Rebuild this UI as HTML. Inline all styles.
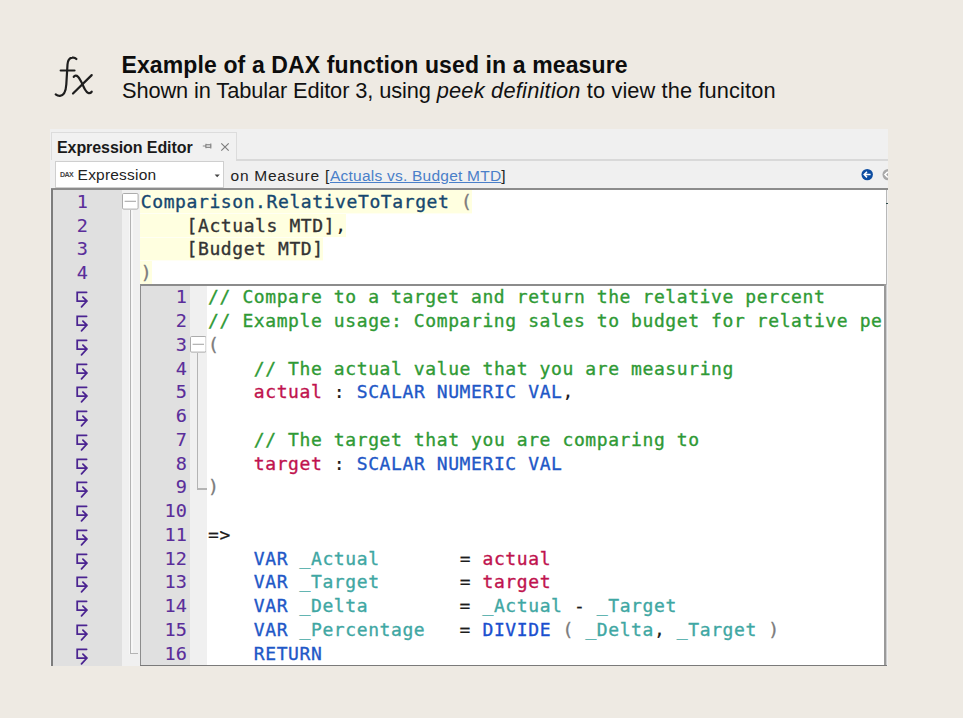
<!DOCTYPE html>
<html lang="en"><head><meta charset="utf-8"><title>Example of a DAX function used in a measure</title>
<style>
html,body{margin:0;padding:0}
body{width:963px;height:718px;background:#eeeae3;position:relative;overflow:hidden;font-family:"Liberation Sans",sans-serif}
.a{position:absolute}
#title{left:121.5px;top:51px;font-size:23px;font-weight:bold;color:#0d0d0d;white-space:nowrap;line-height:28px;letter-spacing:0.12px}
#sub{left:122px;top:77.8px;font-size:21.8px;color:#111;white-space:nowrap;line-height:26px;letter-spacing:0.03px}
#tabt{left:57px;top:137.8px;font-size:16px;font-weight:bold;color:#1a1a1a;white-space:nowrap;line-height:20px;letter-spacing:-0.08px}
#ddt{left:77.6px;top:164.2px;font-size:15.5px;color:#222;white-space:nowrap;line-height:22px;letter-spacing:0.2px}
#dax{left:60px;top:170.5px;font-size:7px;font-weight:bold;color:#444;line-height:8px;letter-spacing:-0.6px}
#onm{left:230.6px;top:165px;font-size:15.5px;color:#222;white-space:nowrap;line-height:22px}
#s1{letter-spacing:-0.11px}#sub i{letter-spacing:0.23px}#s3{letter-spacing:0.11px}
#onm b{font-weight:normal;letter-spacing:0.74px}
#onm u{letter-spacing:0.234px}
#onm u{color:#4a7fc9}
.c{-webkit-text-stroke-width:0.35px;font-family:'DejaVu Sans Mono','Liberation Mono',monospace;font-size:18px;white-space:pre;letter-spacing:0.594px;position:absolute;height:24px;line-height:24px}
.n{color:#5a2d9a;text-align:right;font-size:18.5px;letter-spacing:0.29px;-webkit-text-stroke-width:0.12px}
.fn{color:#16476f}.ms{color:#333}.pp{color:#7c7c7c}.pk{color:#1c1c1c;-webkit-text-stroke-width:0.15px}
.cm{color:#2f9a35}.pr{color:#c0134e}.kw{color:#1f58c7}.vr{color:#3fa7a3}.df{color:#1a4fcf}
</style></head><body>
<svg class="a" style="left:50px;top:52px" width="50" height="50" viewBox="0 0 50 50"><g fill="none" stroke="#1e1e1e" stroke-width="2.2" stroke-linecap="round" stroke-linejoin="round"><path d="M26.4 7.0 C25.2 5.7 23.6 5.4 22.2 5.7 C19 6.3 17.7 9 17.5 12.5 L16.3 32.5 C15.9 38.5 14.5 43.5 10 43.9 C8.2 44 6.8 43.3 5.7 42.4"/><path d="M10.7 18.5 H24.5"/><path d="M23.7 24.8 C24.6 23.5 26.5 23.2 28 24.8 C31 28 32.5 33 35 37.5 C37 41 39.5 42.5 41.7 39.7"/><path d="M41.7 23.1 L23 41.5"/></g></svg>
<div id="title" class="a">Example of a DAX function used in a measure</div>
<div id="sub" class="a"><span id="s1">Shown in Tabular Editor 3, using </span><i>peek definition</i><span id="s3"> to view the funciton</span></div>
<div class="a" style="left:50px;top:129px;width:838px;height:537px;background:#f0f0f0;"></div>
<div class="a" style="left:51px;top:132.2px;width:185.6px;height:28px;background:#f1f1f1;border:1px solid #dcdcdc;border-bottom:none;box-sizing:border-box"></div>
<div class="a" style="left:236px;top:159.3px;width:652px;height:1.6px;background:#d9d9d9;"></div>
<div id="tabt" class="a">Expression Editor</div>
<div class="a" style="left:55px;top:160.5px;width:168.5px;height:27.5px;background:#fff;border:1px solid #cfcfcf;box-sizing:border-box"></div>
<div id="dax" class="a">DAX</div><div id="ddt" class="a">Expression</div>
<div id="onm" class="a"><b id="om1">on Measure [</b><u id="om2">Actuals vs. Budget MTD</u>]</div>
<div class="a" style="left:51px;top:188.5px;width:836.4px;height:477.5px;background:#fff;"></div>
<div class="a" style="left:52px;top:189.5px;width:70px;height:476.5px;background:#e0e0e0;"></div>
<div class="a" style="left:122px;top:189.5px;width:18.3px;height:476.5px;background:#f0f0f0;"></div>
<div class="a" style="left:140.3px;top:189.8px;width:331.47px;height:23.75px;background:#fffff3;"></div>
<div class="a" style="left:140.3px;top:190.2px;width:331.47px;height:22.75px;background:#ffffe0;"></div>
<div class="a" style="left:140.3px;top:213.55px;width:205.74px;height:23.75px;background:#fffff3;"></div>
<div class="a" style="left:140.3px;top:213.95px;width:205.74px;height:22.75px;background:#ffffe0;"></div>
<div class="a" style="left:140.3px;top:237.3px;width:182.88px;height:23.75px;background:#fffff3;"></div>
<div class="a" style="left:140.3px;top:237.7px;width:182.88px;height:22.75px;background:#ffffe0;"></div>
<div class="a" style="left:140.3px;top:261.05px;width:11.43px;height:23.75px;background:#fffff3;"></div>
<div class="a" style="left:140.3px;top:261.45px;width:11.43px;height:22.75px;background:#ffffe0;"></div>
<div class="a" style="left:51px;top:188.0px;width:837px;height:1.5px;background:#8c8c8c;"></div>
<div class="a" style="left:51px;top:188.5px;width:1.6px;height:477.5px;background:#7d7d7d;"></div>
<div class="c n" style="left:60.3px;top:190px;width:28px">1</div><div class="c" style="left:140.8px;top:190px"><span class="fn">Comparison.RelativeToTarget</span> <span class="pp">(</span></div>
<div class="c n" style="left:60.3px;top:214px;width:28px">2</div><div class="c" style="left:140.8px;top:214px">    <span class="ms">[Actuals MTD]</span><span class="pk">,</span></div>
<div class="c n" style="left:60.3px;top:237px;width:28px">3</div><div class="c" style="left:140.8px;top:237px">    <span class="ms">[Budget MTD]</span></div>
<div class="c n" style="left:60.3px;top:261px;width:28px">4</div><div class="c" style="left:140.8px;top:261px"><span class="pp">)</span></div>
<div class="a" style="left:139.5px;top:284.4px;width:747.8px;height:381.6px;background:#fff;"></div>
<div class="a" style="left:140.5px;top:285.5px;width:49px;height:380.5px;background:#e0e0e0;"></div>
<div class="a" style="left:189.5px;top:285.5px;width:17.7px;height:380.5px;background:#f0f0f0;"></div>
<div class="a" style="left:139.5px;top:284.4px;width:747.8px;height:1.2px;background:#8c8c8c;"></div>
<div class="a" style="left:139.5px;top:284.4px;width:1.2px;height:381.6px;background:#8c8c8c;"></div>
<div class="a" style="left:884px;top:284.4px;width:1.6px;height:381.6px;background:#9a9a9a;"></div>
<div class="a" style="left:885.6px;top:284.4px;width:1.7px;height:381.6px;background:#cdcdcd;"></div>
<div class="a" style="left:139.5px;top:665px;width:747.8px;height:1px;background:#7a7a7a;"></div>
<div class="c n" style="left:141.3px;top:285px;width:46px">1</div><div class="c" style="left:208.1px;top:285px"><span class="cm">// Compare to a target and return the relative percent</span></div>
<div class="c n" style="left:141.3px;top:309px;width:46px">2</div><div class="c" style="left:208.1px;top:309px"><span class="cm">// Example usage: Comparing sales to budget for relative pe</span></div>
<div class="c n" style="left:141.3px;top:333px;width:46px">3</div><div class="c" style="left:208.1px;top:333px"><span class="pp">(</span></div>
<div class="c n" style="left:141.3px;top:357px;width:46px">4</div><div class="c" style="left:208.1px;top:357px">    <span class="cm">// The actual value that you are measuring</span></div>
<div class="c n" style="left:141.3px;top:380px;width:46px">5</div><div class="c" style="left:208.1px;top:380px">    <span class="pr">actual</span> <span class="pk">:</span> <span class="kw">SCALAR NUMERIC VAL</span><span class="pk">,</span></div>
<div class="c n" style="left:141.3px;top:404px;width:46px">6</div>
<div class="c n" style="left:141.3px;top:428px;width:46px">7</div><div class="c" style="left:208.1px;top:428px">    <span class="cm">// The target that you are comparing to</span></div>
<div class="c n" style="left:141.3px;top:452px;width:46px">8</div><div class="c" style="left:208.1px;top:452px">    <span class="pr">target</span> <span class="pk">:</span> <span class="kw">SCALAR NUMERIC VAL</span></div>
<div class="c n" style="left:141.3px;top:475px;width:46px">9</div><div class="c" style="left:208.1px;top:475px"><span class="pp">)</span></div>
<div class="c n" style="left:141.3px;top:499px;width:46px">10</div>
<div class="c n" style="left:141.3px;top:523px;width:46px">11</div><div class="c" style="left:208.1px;top:523px"><span class="pk">=&gt;</span></div>
<div class="c n" style="left:141.3px;top:547px;width:46px">12</div><div class="c" style="left:208.1px;top:547px">    <span class="kw">VAR</span> <span class="vr">_Actual</span>       <span class="pk">=</span> <span class="pr">actual</span></div>
<div class="c n" style="left:141.3px;top:570px;width:46px">13</div><div class="c" style="left:208.1px;top:570px">    <span class="kw">VAR</span> <span class="vr">_Target</span>       <span class="pk">=</span> <span class="pr">target</span></div>
<div class="c n" style="left:141.3px;top:594px;width:46px">14</div><div class="c" style="left:208.1px;top:594px">    <span class="kw">VAR</span> <span class="vr">_Delta</span>        <span class="pk">=</span> <span class="vr">_Actual</span> <span class="pk">-</span> <span class="vr">_Target</span></div>
<div class="c n" style="left:141.3px;top:618px;width:46px">15</div><div class="c" style="left:208.1px;top:618px">    <span class="kw">VAR</span> <span class="vr">_Percentage</span>   <span class="pk">=</span> <span class="df">DIVIDE</span> <span class="pp">(</span> <span class="vr">_Delta</span><span class="pk">,</span> <span class="vr">_Target</span> <span class="pp">)</span></div>
<div class="c n" style="left:141.3px;top:642px;width:46px">16</div><div class="c" style="left:208.1px;top:642px">    <span class="kw">RETURN</span></div>
<div class="a" style="left:128.6px;top:209.7px;width:4.4px;height:443.90000000000003px;background:#f7f7f7;"></div>
<div class="a" style="left:130.0px;top:209.7px;width:1.2px;height:443.90000000000003px;background:#b4b4b4;"></div>
<div class="a" style="left:130.0px;top:652.6px;width:8.4px;height:1.1px;background:#b4b4b4;"></div>
<svg class="a" style="left:122.2px;top:193.2px" width="16.6" height="16.6" viewBox="0 0 16.6 16.6"><rect x="0.5" y="0.5" width="15.600000000000001" height="15.600000000000001" rx="1.2" fill="#fff" stroke="#ababab" stroke-width="1"/><path d="M2.6 8.3 H14.000000000000002" stroke="#a8a8a8" stroke-width="1.1"/></svg>
<div class="a" style="left:197.2px;top:352.7px;width:1.2px;height:136.77500000000003px;background:#b4b4b4;"></div>
<div class="a" style="left:197.2px;top:488.475px;width:9.4px;height:1.1px;background:#b4b4b4;"></div>
<svg class="a" style="left:189.7px;top:336.3px" width="16.6" height="16.6" viewBox="0 0 16.6 16.6"><rect x="0.5" y="0.5" width="15.600000000000001" height="15.600000000000001" rx="1.2" fill="#fff" stroke="#ababab" stroke-width="1"/><path d="M2.6 8.3 H14.000000000000002" stroke="#a8a8a8" stroke-width="1.1"/></svg>
<svg class="a" style="left:74px;top:288.48px" width="16" height="21" viewBox="0 0 16 21"><path d="M12.6 4.3 H3.2 V13.1 H12.7 M8.9 9.2 L12.9 13.1 L7.5 18.9" fill="none" stroke="#4b2491" stroke-width="1.75" stroke-linecap="round"/></svg>
<svg class="a" style="left:74px;top:312.23px" width="16" height="21" viewBox="0 0 16 21"><path d="M12.6 4.3 H3.2 V13.1 H12.7 M8.9 9.2 L12.9 13.1 L7.5 18.9" fill="none" stroke="#4b2491" stroke-width="1.75" stroke-linecap="round"/></svg>
<svg class="a" style="left:74px;top:335.98px" width="16" height="21" viewBox="0 0 16 21"><path d="M12.6 4.3 H3.2 V13.1 H12.7 M8.9 9.2 L12.9 13.1 L7.5 18.9" fill="none" stroke="#4b2491" stroke-width="1.75" stroke-linecap="round"/></svg>
<svg class="a" style="left:74px;top:359.73px" width="16" height="21" viewBox="0 0 16 21"><path d="M12.6 4.3 H3.2 V13.1 H12.7 M8.9 9.2 L12.9 13.1 L7.5 18.9" fill="none" stroke="#4b2491" stroke-width="1.75" stroke-linecap="round"/></svg>
<svg class="a" style="left:74px;top:383.48px" width="16" height="21" viewBox="0 0 16 21"><path d="M12.6 4.3 H3.2 V13.1 H12.7 M8.9 9.2 L12.9 13.1 L7.5 18.9" fill="none" stroke="#4b2491" stroke-width="1.75" stroke-linecap="round"/></svg>
<svg class="a" style="left:74px;top:407.23px" width="16" height="21" viewBox="0 0 16 21"><path d="M12.6 4.3 H3.2 V13.1 H12.7 M8.9 9.2 L12.9 13.1 L7.5 18.9" fill="none" stroke="#4b2491" stroke-width="1.75" stroke-linecap="round"/></svg>
<svg class="a" style="left:74px;top:430.98px" width="16" height="21" viewBox="0 0 16 21"><path d="M12.6 4.3 H3.2 V13.1 H12.7 M8.9 9.2 L12.9 13.1 L7.5 18.9" fill="none" stroke="#4b2491" stroke-width="1.75" stroke-linecap="round"/></svg>
<svg class="a" style="left:74px;top:454.73px" width="16" height="21" viewBox="0 0 16 21"><path d="M12.6 4.3 H3.2 V13.1 H12.7 M8.9 9.2 L12.9 13.1 L7.5 18.9" fill="none" stroke="#4b2491" stroke-width="1.75" stroke-linecap="round"/></svg>
<svg class="a" style="left:74px;top:478.48px" width="16" height="21" viewBox="0 0 16 21"><path d="M12.6 4.3 H3.2 V13.1 H12.7 M8.9 9.2 L12.9 13.1 L7.5 18.9" fill="none" stroke="#4b2491" stroke-width="1.75" stroke-linecap="round"/></svg>
<svg class="a" style="left:74px;top:502.23px" width="16" height="21" viewBox="0 0 16 21"><path d="M12.6 4.3 H3.2 V13.1 H12.7 M8.9 9.2 L12.9 13.1 L7.5 18.9" fill="none" stroke="#4b2491" stroke-width="1.75" stroke-linecap="round"/></svg>
<svg class="a" style="left:74px;top:525.98px" width="16" height="21" viewBox="0 0 16 21"><path d="M12.6 4.3 H3.2 V13.1 H12.7 M8.9 9.2 L12.9 13.1 L7.5 18.9" fill="none" stroke="#4b2491" stroke-width="1.75" stroke-linecap="round"/></svg>
<svg class="a" style="left:74px;top:549.73px" width="16" height="21" viewBox="0 0 16 21"><path d="M12.6 4.3 H3.2 V13.1 H12.7 M8.9 9.2 L12.9 13.1 L7.5 18.9" fill="none" stroke="#4b2491" stroke-width="1.75" stroke-linecap="round"/></svg>
<svg class="a" style="left:74px;top:573.48px" width="16" height="21" viewBox="0 0 16 21"><path d="M12.6 4.3 H3.2 V13.1 H12.7 M8.9 9.2 L12.9 13.1 L7.5 18.9" fill="none" stroke="#4b2491" stroke-width="1.75" stroke-linecap="round"/></svg>
<svg class="a" style="left:74px;top:597.23px" width="16" height="21" viewBox="0 0 16 21"><path d="M12.6 4.3 H3.2 V13.1 H12.7 M8.9 9.2 L12.9 13.1 L7.5 18.9" fill="none" stroke="#4b2491" stroke-width="1.75" stroke-linecap="round"/></svg>
<svg class="a" style="left:74px;top:620.98px" width="16" height="21" viewBox="0 0 16 21"><path d="M12.6 4.3 H3.2 V13.1 H12.7 M8.9 9.2 L12.9 13.1 L7.5 18.9" fill="none" stroke="#4b2491" stroke-width="1.75" stroke-linecap="round"/></svg>
<svg class="a" style="left:74px;top:644.73px" width="16" height="21" viewBox="0 0 16 21"><path d="M12.6 4.3 H3.2 V13.1 H12.7 M8.9 9.2 L12.9 13.1 L7.5 18.9" fill="none" stroke="#4b2491" stroke-width="1.75" stroke-linecap="round"/></svg>
<svg class="a" style="left:202px;top:141px" width="12" height="10" viewBox="0 0 12 10"><path d="M0.8 5 H4" fill="none" stroke="#8a8a8a" stroke-width="1"/><path d="M4 2.7 V7.3 M8.8 2.4 V7.6" fill="none" stroke="#808080" stroke-width="1.1"/><path d="M4 3.6 H8.6 V6.5 H4 Z" fill="#d4d4d4" stroke="#858585" stroke-width="0.9"/></svg>
<svg class="a" style="left:220px;top:141.5px" width="10" height="10" viewBox="0 0 10 10"><path d="M1.3 1.3 L8.7 8.7 M8.7 1.3 L1.3 8.7" fill="none" stroke="#7c7c7c" stroke-width="1.15"/></svg>
<svg class="a" style="left:214px;top:173.5px" width="7" height="4" viewBox="0 0 7 4"><path d="M0.6 0.4 H5.8 L3.2 3.2 Z" fill="#444"/></svg>
<svg class="a" style="left:860px;top:168px" width="28" height="14" viewBox="0 0 28 14"><circle cx="7.2" cy="6.6" r="5.7" fill="#0d4da1"/><path d="M10.6 6.6 H4.4 M7 3.8 L4.2 6.6 L7 9.4" fill="none" stroke="#fff" stroke-width="1.5"/><circle cx="28.2" cy="6.6" r="5.7" fill="#a9a9a9"/><path d="M27.8 3.8 L25 6.6 L27.8 9.4" fill="none" stroke="#fff" stroke-width="1.5"/></svg>
<div class="a" style="left:886.3px;top:190px;width:1px;height:95px;background:#b8b8b8;"></div>
<div class="a" style="left:885.8px;top:203px;width:2.2px;height:1.3px;background:#2b4a4a;"></div>
</body></html>
